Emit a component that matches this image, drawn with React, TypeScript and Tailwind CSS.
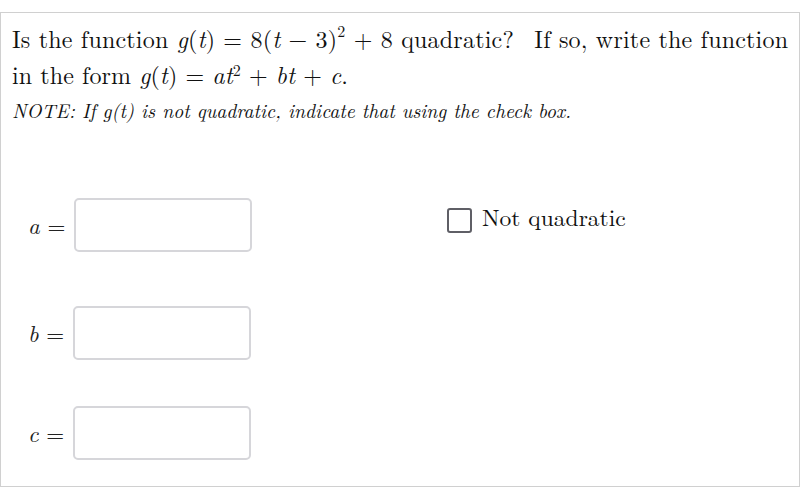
import React from "react";

const serif = { fontFamily: '"Latin Modern Roman", "Liberation Serif", "DejaVu Serif", serif' };

function V({ children }: { children: React.ReactNode }) {
  return <i className="italic">{children}</i>;
}

function Row({ label, mt, ml }: { label: string; mt: string; ml: string }) {
  return (
    <div className={`flex items-center ${mt}`}>
      <div className="pl-[16px] text-[23px] text-[#222] whitespace-nowrap">
        <i>{label}</i> =
      </div>
      <div className={`h-[54px] w-[178px] rounded-[5px] border-2 border-[#d6d6da] bg-white ${ml}`} />
    </div>
  );
}

export default function App() {
  return (
    <div className="w-[808px] h-[493px] bg-white pt-[12px]" style={serif}>
      <div className="w-[800px] h-[475px] border border-[#d0d0d0] px-[11px] pt-[7px] text-[#111]">
        <p className="text-[24px] leading-[36px] whitespace-nowrap tracking-[0.2px]">
          Is the function <V>g</V>(<V>t</V>) = 8(<V>t</V> − 3)<sup className="text-[16px] -top-[0.7em]">2</sup> + 8 quadratic?&nbsp; If so, write the function
        </p>
        <p className="text-[24px] leading-[36px] whitespace-nowrap tracking-[0.1px]">
          in the form <V>g</V>(<V>t</V>) = <V>at</V><sup className="text-[16px]">2</sup> + <V>bt</V> + <V>c</V>.
        </p>
        <p className="mt-[6px] text-[19.6px] leading-[24px] italic whitespace-nowrap">
          NOTE: If g(t) is not quadratic, indicate that using the check box.
        </p>
        <div className="flex mt-[76px]">
          <div className="flex flex-col w-[435px]">
            <Row label="a" mt="mt-0" ml="ml-[9px]" />
            <Row label="b" mt="mt-[54px]" ml="ml-[9px]" />
            <Row label="c" mt="mt-[46px]" ml="ml-[9px]" />
          </div>
          <div className="flex items-start mt-[10px]">
            <div className="w-[25px] h-[25px] rounded-[3px] border-2 border-[#5f5f66] bg-white" />
            <span className="ml-[10px] -mt-[3px] text-[23.5px] leading-[24px]">Not quadratic</span>
          </div>
        </div>
      </div>
    </div>
  );
}
